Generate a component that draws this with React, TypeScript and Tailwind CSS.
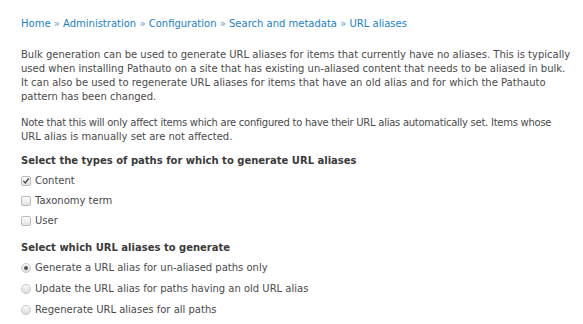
import { useState } from "react";

const crumbs = ["Home", "Administration", "Configuration", "Search and metadata", "URL aliases"];

const types = [
  { id: "content", label: "Content", checked: true },
  { id: "taxonomy", label: "Taxonomy term", checked: false },
  { id: "user", label: "User", checked: false },
];

const actions = [
  { id: "insert", label: "Generate a URL alias for un-aliased paths only" },
  { id: "update", label: "Update the URL alias for paths having an old URL alias" },
  { id: "all", label: "Regenerate URL aliases for all paths" },
];

function Check({ checked }: { checked: boolean }) {
  return (
    <span className="w-[10px] h-[10px] rounded-[2px] border border-[#bcbcbc] bg-gradient-to-b from-[#fdfdfd] to-[#e2e2e2] grid place-items-center shrink-0">
      {checked && (
        <svg viewBox="0 0 10 10" className="w-[8px] h-[8px]">
          <path d="M2 5.2 L4.1 7.4 L8.2 2.2" fill="none" stroke="#444" strokeWidth="1.6" strokeLinecap="round" />
        </svg>
      )}
    </span>
  );
}

function Radio({ on }: { on: boolean }) {
  return (
    <span className="w-[10px] h-[10px] rounded-full border border-[#c8c8c8] bg-gradient-to-b from-[#fafafa] to-[#dcdcdc] grid place-items-center shrink-0">
      {on && <span className="w-[4px] h-[4px] rounded-full bg-[#555]" />}
    </span>
  );
}

export default function App() {
  const [checked, setChecked] = useState<Record<string, boolean>>(
    Object.fromEntries(types.map((t) => [t.id, t.checked]))
  );
  const [action, setAction] = useState("insert");

  return (
    <div className="w-[583px] h-[324px] bg-white overflow-hidden pl-[21px] pt-[17px] text-[10px] leading-[14px] text-[#4a4a4a] font-['DejaVu_Sans',sans-serif]">
      <nav className="text-[#1a7fc7]">
        {crumbs.map((c, i) => (
          <span key={c}>
            {i > 0 && <span className="text-[#6a9dc4]"> » </span>}
            <a href="#">{c}</a>
          </span>
        ))}
      </nav>

      {/* line breaks follow the original wrapping */}
      <p className="mt-[17px] whitespace-nowrap">
        <span className="block">
          Bulk generation can be used to generate URL aliases for items that currently have no aliases. This is typically
        </span>
        <span className="block">
          used when installing Pathauto on a site that has existing un-aliased content that needs to be aliased in bulk.
        </span>
        <span className="block">
          It can also be used to regenerate URL aliases for items that have an old alias and for which the Pathauto
        </span>
        <span className="block">pattern has been changed.</span>
      </p>

      <p className="mt-[12px] whitespace-nowrap">
        <span className="block tracking-[-0.26px]">
          Note that this will only affect items which are configured to have their URL alias automatically set. Items whose
        </span>
        <span className="block">URL alias is manually set are not affected.</span>
      </p>

      <fieldset className="mt-[10px]">
        <div className="font-bold text-[#3a3a3a]">Select the types of paths for which to generate URL aliases</div>
        <div className="mt-[6px] flex flex-col gap-[6px]">
          {types.map((t) => (
            <label
              key={t.id}
              className="flex items-center gap-[4px] cursor-pointer"
              onClick={() => setChecked((s) => ({ ...s, [t.id]: !s[t.id] }))}
            >
              <Check checked={checked[t.id]} />
              <span>{t.label}</span>
            </label>
          ))}
        </div>
      </fieldset>

      <fieldset className="mt-[13px]">
        <div className="font-bold text-[#3a3a3a]">Select which URL aliases to generate</div>
        <div className="mt-[6px] flex flex-col gap-[7px]">
          {actions.map((a) => (
            <label key={a.id} className="flex items-center gap-[4px] cursor-pointer" onClick={() => setAction(a.id)}>
              <Radio on={action === a.id} />
              <span>{a.label}</span>
            </label>
          ))}
        </div>
      </fieldset>
    </div>
  );
}
